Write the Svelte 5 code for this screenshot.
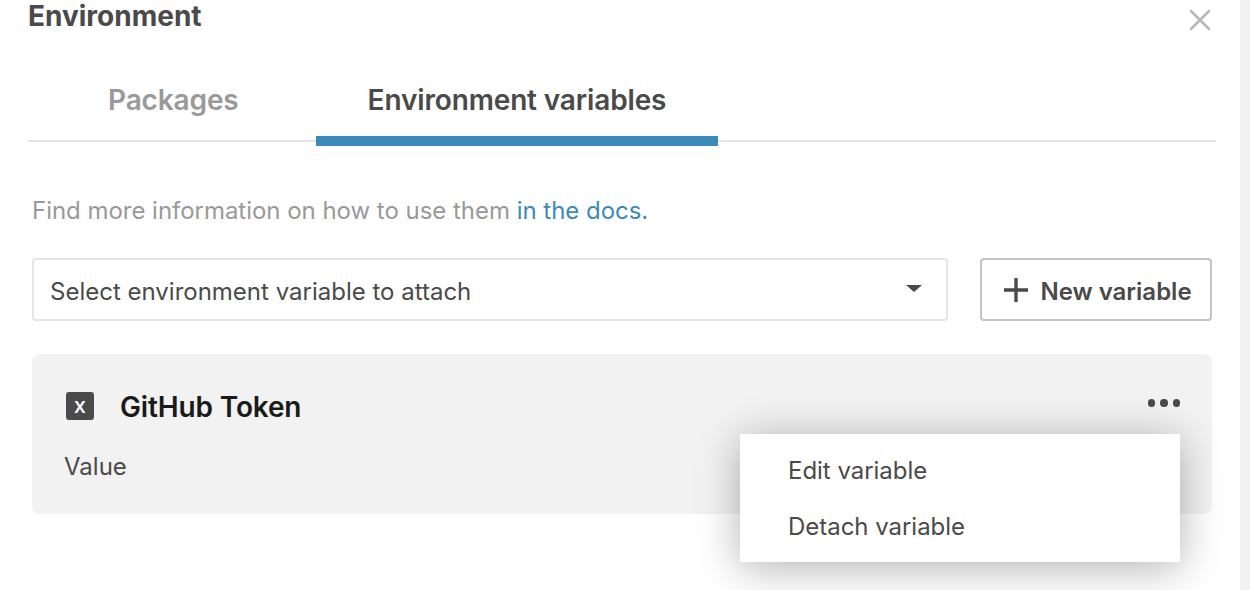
<script>
  let tabs = ['Packages', 'Environment variables'];
  let active = 1;
  let menuItems = ['Edit variable', 'Detach variable'];
</script>

<div class="page">
  <div class="modal">
    <header class="head">
      <h2 class="title">Environment</h2>
      <button class="close" aria-label="Close">
        <svg width="22" height="22" viewBox="0 0 22 22">
          <path d="M2 2 L20 20 M20 2 L2 20" stroke="#b8b8b8" stroke-width="2.6" stroke-linecap="round" fill="none" />
        </svg>
      </button>
    </header>

    <nav class="tabs">
      {#each tabs as tab, i}
        <div class="tab" class:active={i === active}>{tab}</div>
      {/each}
    </nav>

    <div class="body">
      <p class="help">Find more information on how to use them <a href="#docs">in the docs.</a></p>

      <div class="controls">
        <div class="select">
          <span class="label">Select environment variable to attach</span>
          <i class="caret"></i>
        </div>
        <button class="new">
          <svg width="24" height="24" viewBox="0 0 24 24">
            <path d="M12 0 V24 M0 12 H24" stroke="#4a4a4a" stroke-width="3.4" fill="none" />
          </svg>
          <span class="label">New variable</span>
        </button>
      </div>

      <div class="card">
        <div class="card-head">
          <span class="badge">x</span>
          <span class="name">GitHub Token</span>
          <span class="dots"><i></i><i></i><i></i></span>
        </div>
        <div class="value">Value</div>

        <ul class="menu">
          {#each menuItems as item}
            <li>{item}</li>
          {/each}
        </ul>
      </div>
    </div>
  </div>
</div>

<style>
  :global(body) {
    margin: 0;
    background: #f2f2f2;
    font-family: Inter, "Liberation Sans", sans-serif;
    color: #4a4a4a;
  }

  .page {
    width: 1240px;
    height: 590px;
    background: #fff;
    overflow: hidden;
  }

  .modal {
    padding: 0 24px 0 28px;
  }

  .head {
    display: flex;
    justify-content: space-between;
    height: 60px;
  }

  .title {
    margin: 0;
    font-size: 28px;
    font-weight: 700;
    line-height: 32px;
    color: #4a4a4a;
  }

  .close {
    border: 0;
    background: none;
    padding: 0;
    margin: 9px 5px 0 0;
    width: 22px;
    height: 22px;
  }

  .tabs {
    display: flex;
    height: 80px;
    padding-left: 28px;
    border-bottom: 2px solid #e5e5e5;
  }

  .tab {
    box-sizing: border-box;
    height: 86px;
    padding: 23px 52px 0;
    font-size: 28px;
    font-weight: 600;
    letter-spacing: -0.14px;
    line-height: 34px;
    color: #999;
    border-bottom: 10px solid transparent;
    margin-right: 25px;
  }

  .tab.active {
    color: #4a4a4a;
    border-bottom-color: #3b8ab8;
    margin-right: 0;
  }

  .body {
    padding: 0 4px;
  }

  .help {
    margin: 51px 0 0;
    font-size: 24px;
    letter-spacing: -0.03px;
    line-height: 36px;
    color: #999;
  }

  .help a {
    color: #3b8ab8;
    text-decoration: none;
  }

  .controls {
    display: flex;
    gap: 32px;
    margin-top: 29px;
  }

  .label {
    padding-top: 3px;
  }

  .select {
    flex: 1;
    box-sizing: border-box;
    height: 63px;
    display: flex;
    align-items: center;
    justify-content: space-between;
    padding: 0 24px 0 16px;
    border: 2px solid #e5e5e5;
    border-radius: 4px;
    font-size: 24px;
  }

  .caret {
    width: 0;
    height: 0;
    margin-top: -2px;
    border-left: 8px solid transparent;
    border-right: 8px solid transparent;
    border-top: 7px solid #4a4a4a;
  }

  .new {
    box-sizing: border-box;
    width: 232px;
    height: 63px;
    display: flex;
    align-items: center;
    justify-content: center;
    gap: 12px;
    border: 2px solid #c4c4c4;
    border-radius: 4px;
    background: #fff;
    font-family: inherit;
    font-size: 24px;
    font-weight: 600;
    color: #4a4a4a;
    padding: 0 0 0 4px;
  }

  .card {
    position: relative;
    box-sizing: border-box;
    height: 160px;
    margin-top: 33px;
    padding: 32px 32px 0;
    background: #f2f2f2;
    border-radius: 8px;
  }

  .card-head {
    display: flex;
    align-items: center;
    height: 40px;
  }

  .badge {
    width: 28px;
    height: 28px;
    margin: 0 26px 0 2px;
    border-radius: 3px;
    background: #4a4a4a;
    color: #fff;
    font-size: 22px;
    font-weight: 500;
    line-height: 26px;
    text-align: center;
  }

  .name {
    flex: 1;
    padding-top: 2px;
    font-size: 28px;
    font-weight: 600;
    letter-spacing: -0.15px;
    color: #1a1a1a;
  }

  .dots {
    display: flex;
    gap: 5px;
    margin-top: -6px;
  }

  .dots i {
    width: 7.33px;
    height: 7.33px;
    border-radius: 50%;
    background: #4a4a4a;
  }

  .value {
    margin-top: 23px;
    font-size: 24px;
    line-height: 36px;
  }

  .menu {
    position: absolute;
    left: 708px;
    top: 80px;
    width: 440px;
    margin: 0;
    padding: 9px 0 7px;
    list-style: none;
    background: #fff;
    box-shadow: 0 6px 40px rgba(0, 0, 0, 0.3);
  }

  .menu li {
    height: 56px;
    line-height: 56px;
    padding-left: 48px;
    font-size: 24px;
    letter-spacing: -0.03px;
  }
</style>
